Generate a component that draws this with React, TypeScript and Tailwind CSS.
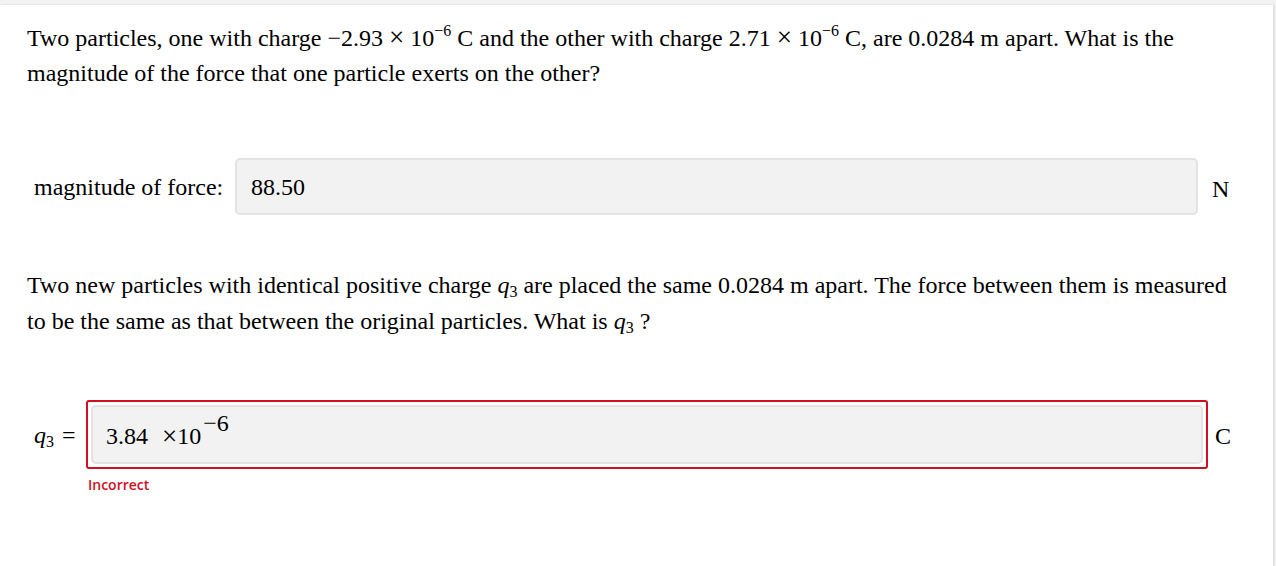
import React from "react";

const serif = "font-['Liberation_Serif','Times_New_Roman',serif]";

function Q3() {
  return (
    <span className="italic whitespace-nowrap">
      q<span className="not-italic text-[16px] leading-[0] relative top-[4px]">3</span>
    </span>
  );
}

function Sup({ children }: { children: React.ReactNode }) {
  return <span className="text-[16px] leading-[0] relative -top-[10px]">{children}</span>;
}

function Times() {
  return <span className="text-[27px] leading-[0]">×</span>;
}

export default function App() {
  return (
    <div className={`min-h-[566px] bg-[#f2f2f2] pt-[5px] pr-[3px] ${serif} text-black`}>
      <div className="bg-white min-h-[561px] shadow-[1px_0_2px_rgba(0,0,0,0.12)] pt-[16px] pl-[27px] pr-[45px]">
        {/* question 1 */}
        <p className="text-[24px] leading-[35px]">
          Two particles, one with charge −2.93 <Times /> 10<Sup>−6</Sup> C and the other with charge
          2.71 <Times /> 10<Sup>−6</Sup> C, are 0.0284 m apart. What is the magnitude of the force
          that one particle exerts on the other?
        </p>

        <div className="flex items-center mt-[67px] pl-[7px] text-[24px] leading-[30px] -mr-[10px]">
          <span className="w-[201px] shrink-0">magnitude of force:</span>
          <div className="w-[963px] shrink-0 h-[57px] rounded-[5px] border-2 border-[#e3e3e3] bg-[#f2f2f2] flex items-center pl-[14px]">
            88.50
          </div>
          <span className="ml-[14px] pt-[4px] shrink-0">N</span>
        </div>

        {/* question 2 */}
        <p className="text-[24px] leading-[36px] mt-[52px] -mr-[10px]">
          Two new particles with identical positive charge <Q3 /> are placed the same 0.0284 m
          apart. The force between them is measured to be the same as that between the original
          particles. What is <Q3 /> ?
        </p>

        <div className="flex items-center mt-[61px] pl-[7px] text-[24px] leading-[30px] -mr-[10px]">
          <span className="w-[52px] shrink-0 flex items-center">
            <Q3 />
            <span className="ml-[8px]">=</span>
          </span>
          <div className="w-[1122px] shrink-0 h-[69px] rounded-[3px] border-2 border-[#d0101e] p-[3px]">
            <div className="h-full rounded-[5px] border-2 border-[#e3e3e3] bg-[#f2f2f2] flex items-center pl-[13px] pt-[2px]">
              <span>3.84</span>
              <span className="ml-[14px] text-[27px]">×</span>
              <span>10</span>
              <span className="relative -top-[13px] ml-[2px]">−6</span>
            </div>
          </div>
          <span className="ml-[7px] pt-[2px] shrink-0">C</span>
        </div>

        <div className="pl-[61px] mt-[5px] font-['Open_Sans','Liberation_Sans',sans-serif] font-semibold text-[14px] text-[#d0101e]">
          Incorrect
        </div>
      </div>
    </div>
  );
}
